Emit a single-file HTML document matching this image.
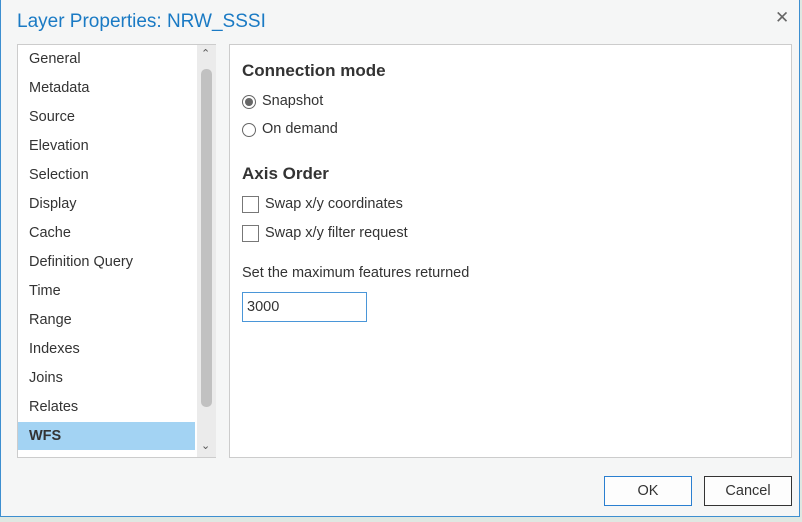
<!DOCTYPE html>
<html><head><style>
*{margin:0;padding:0;box-sizing:border-box}
body{width:802px;height:522px;overflow:hidden;background:#dfe8e2;font-family:"Liberation Sans",sans-serif;position:relative}
.dlg{position:absolute;left:0;top:0;width:800px;height:517px;background:#f5f6f6;border:1px solid #3d8fd0;border-top:none}
.abs{position:absolute}
.t{color:#1a7ac4;font-size:19px;left:16px;top:11px}
.x{left:774px;top:8px;font-size:17px;color:#666;font-weight:300}
.list{left:16px;top:44px;width:199px;height:414px;background:#fff;border:1px solid #ccc}
.it{position:absolute;left:0;width:177px;height:29px;padding-left:11px;line-height:29px;font-size:14.5px;color:#333}
.sel{background:#a3d3f3;font-weight:bold}
.sb{left:179px;top:0;width:19px;height:412px;background:#ebebeb}
.thumb{left:183px;top:24px;width:11px;height:338px;background:#c1c1c1;border-radius:5px}
.panel{left:228px;top:44px;width:563px;height:414px;background:#fff;border:1px solid #ccc}
.h{font-size:17px;font-weight:bold;color:#333}
.l{font-size:14.5px;color:#333}
.rb{width:14px;height:14px;border:1px solid #666;border-radius:50%}
.cb{width:17px;height:17px;border:1px solid #777}
.btn{top:476px;width:88px;height:30px;border:1px solid #333;background:#fdfdfd;font-size:14.5px;text-align:center;line-height:28px;color:#333}
</style></head><body>
<div class="dlg">
<div class="abs t">Layer Properties: NRW_SSSI</div>
<div class="abs x">✕</div>
<div class="abs list">
<div class="it" style="top:0">General</div>
<div class="it" style="top:29px">Metadata</div>
<div class="it" style="top:58px">Source</div>
<div class="it" style="top:87px">Elevation</div>
<div class="it" style="top:116px">Selection</div>
<div class="it" style="top:145px">Display</div>
<div class="it" style="top:174px">Cache</div>
<div class="it" style="top:203px">Definition Query</div>
<div class="it" style="top:232px">Time</div>
<div class="it" style="top:261px">Range</div>
<div class="it" style="top:290px">Indexes</div>
<div class="it" style="top:319px">Joins</div>
<div class="it" style="top:348px">Relates</div>
<div class="it sel" style="top:377px;height:28px">WFS</div>
<div class="abs sb"></div>
<div class="abs thumb"></div>
<div class="abs" style="left:183px;top:2px;font-size:11px;color:#555">⌃</div>
<div class="abs" style="left:183px;top:394px;font-size:11px;color:#555">⌄</div>
</div>
<div class="abs panel">
<div class="abs h" style="left:12px;top:16px">Connection mode</div>
<div class="abs rb" style="left:12px;top:50px"><div style="width:8px;height:8px;margin:2px;border-radius:50%;background:#666"></div></div>
<div class="abs l" style="left:32px;top:48px">Snapshot</div>
<div class="abs rb" style="left:12px;top:78px"></div>
<div class="abs l" style="left:32px;top:76px">On demand</div>
<div class="abs h" style="left:12px;top:119px">Axis Order</div>
<div class="abs cb" style="left:12px;top:151px"></div>
<div class="abs l" style="left:35px;top:151px">Swap x/y coordinates</div>
<div class="abs cb" style="left:12px;top:180px"></div>
<div class="abs l" style="left:35px;top:180px">Swap x/y filter request</div>
<div class="abs l" style="left:12px;top:220px">Set the maximum features returned</div>
<div class="abs" style="left:12px;top:247px;width:125px;height:30px;border:1px solid #4a96d8;font-size:14.5px;line-height:28px;padding-left:4px;color:#333">3000</div>
</div>
<div class="abs btn" style="left:603px;border-color:#2a7fd0">OK</div>
<div class="abs btn" style="left:703px">Cancel</div>
</div>
</body></html>
